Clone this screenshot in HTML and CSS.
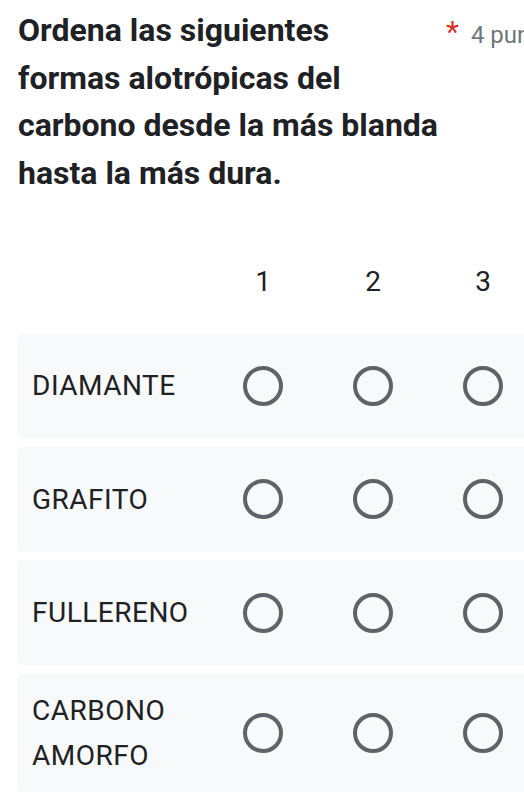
FILE: index.html
```
<!DOCTYPE html>
<html lang="es">
<head>
    <meta charset="UTF-8">
    <meta name="viewport" content="width=device-width, initial-scale=1.0">
    <title>Formas alotrópicas del carbono</title>
    <link rel="stylesheet" href="styles.css">
</head>
<body>
    <div class="question">
        <div class="question-header">
            <div class="question-title">Ordena las siguientes<br>formas alotrópicas del<br>carbono desde la más blanda<br>hasta la más dura.</div>
            <span class="required">*</span>
            <span class="points">4 puntos</span>
        </div>

        <div class="grid">
            <div class="grid-head">
                <div></div>
                <div class="col-label">1</div>
                <div class="col-label">2</div>
                <div class="col-label">3</div>
            </div>

            <div class="grid-row">
                <div class="row-label">DIAMANTE</div>
                <div class="cell"><span class="radio"></span></div>
                <div class="cell"><span class="radio"></span></div>
                <div class="cell"><span class="radio"></span></div>
            </div>
            <div class="grid-row">
                <div class="row-label">GRAFITO</div>
                <div class="cell"><span class="radio"></span></div>
                <div class="cell"><span class="radio"></span></div>
                <div class="cell"><span class="radio"></span></div>
            </div>
            <div class="grid-row">
                <div class="row-label">FULLERENO</div>
                <div class="cell"><span class="radio"></span></div>
                <div class="cell"><span class="radio"></span></div>
                <div class="cell"><span class="radio"></span></div>
            </div>
            <div class="grid-row">
                <div class="row-label">CARBONO AMORFO</div>
                <div class="cell"><span class="radio"></span></div>
                <div class="cell"><span class="radio"></span></div>
                <div class="cell"><span class="radio"></span></div>
            </div>
        </div>
    </div>
</body>
</html>
```

FILE: styles.css
```
body {
    margin: 0;
    font-family: Roboto, "Liberation Sans", Arial, sans-serif;
    color: #202124;
    background: #fff;
    overflow: hidden;
}
.question {
    width: 560px;
}
.question-header {
    display: flex;
    align-items: flex-start;
    padding: 7px 0 0 18px;
    white-space: nowrap;
}
.question-title {
    flex: 0 0 425px;
    font-size: 32px;
    font-weight: 700;
    line-height: 47.7px;
    margin-right: 3px;
}
.required {
    color: #d93025;
    font-size: 30px;
    line-height: 50px;
}
.points {
    margin-left: 12px;
    color: #70757a;
    font-size: 24px;
    line-height: 56px;
}
.grid {
    margin-top: 64px;
    padding-left: 17px;
}
.grid-head,
.grid-row {
    display: grid;
    grid-template-columns: 176px 110px 110px 110px;
    align-items: center;
    padding-left: 15px;
}
.grid-head {
    margin-bottom: 31.5px;
}
.col-label {
    text-align: center;
    font-size: 28px;
    line-height: 40px;
}
.grid-row {
    min-height: 105px;
    box-sizing: border-box;
    padding-top: 14px;
    padding-bottom: 14px;
    margin-bottom: 8.5px;
    background: #f8f9fa;
    border-radius: 6px;
    width: 540px;
}
.row-label {
    font-size: 28px;
    letter-spacing: 0.5px;
    line-height: 45px;
    padding-right: 20px;
    white-space: normal;
}
.cell {
    display: flex;
    justify-content: center;
}
.radio {
    width: 40px;
    height: 40px;
    box-sizing: border-box;
    border: 4px solid #5f6368;
    border-radius: 50%;
}
```
